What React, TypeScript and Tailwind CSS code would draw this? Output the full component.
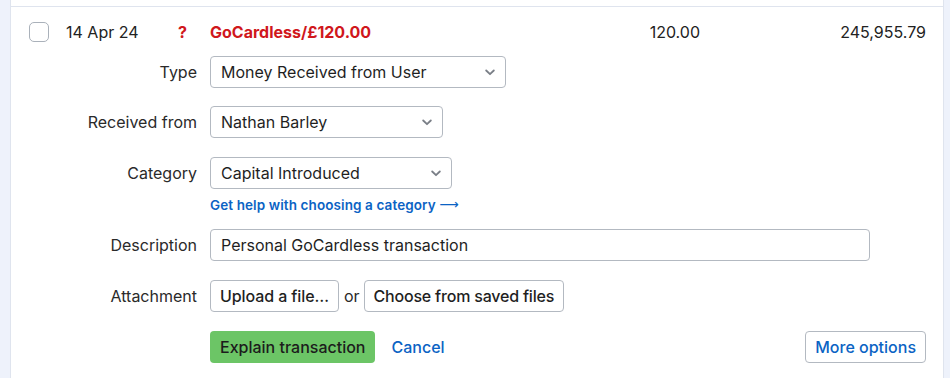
import React from 'react';

const Chevron = () => (
  <svg width="10" height="7" viewBox="0 0 10 7" className="shrink-0">
    <path d="M1.2 1.5 L5 5.2 L8.8 1.5" fill="none" stroke="#7a7f87" strokeWidth="1.8" strokeLinecap="round" strokeLinejoin="round" />
  </svg>
);

const Select = ({ value, width }: { value: string; width: string }) => (
  <div className={`flex items-center justify-between h-[32px] ${width} border border-[#b3b9c1] rounded-[4px] pl-[10px] pr-[10px] bg-white`}>
    <span className="text-[16px] text-[#1f1f1f] leading-none">{value}</span>
    <Chevron />
  </div>
);

const Label = ({ children }: { children: React.ReactNode }) => (
  <div className="w-[186px] text-right text-[16px] text-[#2a2a2a] shrink-0">{children}</div>
);

export default function App() {
  return (
    <div className="h-[378px] w-[950px] bg-[#eef2fb] overflow-hidden" style={{ fontFamily: 'Inter, "Noto Sans", sans-serif' }}>
      <div className="ml-[10px] w-[934px] h-full bg-white border-x border-[#dfe4ee]">
        <div className="h-[6px]" />
        <div className="border-t border-[#dfe4ee]">
          {/* Transaction row */}
          <div className="flex items-center h-[49px] text-[16px] text-[#222]">
            <div className="ml-[18px] w-[20px] h-[20px] rounded-[5px] border border-[#aab1ba] bg-white shrink-0" />
            <div className="ml-[17px] w-[112px]">14 Apr 24</div>
            <div className="w-[32px] text-[#d0171c] font-bold">?</div>
            <div className="flex-1 text-[#d0171c] font-bold">GoCardless/£120.00</div>
            <div className="w-[120px] text-right">120.00</div>
            <div className="w-[226px] text-right pr-[17px] box-content">245,955.79</div>
          </div>

          {/* Form */}
          <div className="flex flex-col">
            <div className="flex items-center gap-[13px]">
              <Label>Type</Label>
              <Select value="Money Received from User" width="w-[296px]" />
            </div>
            <div className="flex items-center gap-[13px] mt-[18px]">
              <Label>Received from</Label>
              <Select value="Nathan Barley" width="w-[233px]" />
            </div>
            <div className="flex items-center gap-[13px] mt-[19px]">
              <Label>Category</Label>
              <Select value="Capital Introduced" width="w-[242px]" />
            </div>
            <div className="ml-[199px] mt-[6px] h-[20px] flex items-center text-[13.5px] font-semibold text-[#0b63c4] tracking-[0.1px]">
              Get help with choosing a category&nbsp;<span style={{ fontFamily: '"DejaVu Sans", sans-serif' }} className="font-normal leading-none">⟶</span>
            </div>
            <div className="flex items-center gap-[13px] mt-[14px]">
              <Label>Description</Label>
              <div className="flex items-center h-[32px] w-[660px] border border-[#b3b9c1] rounded-[4px] pl-[10px] text-[16px] text-[#1f1f1f]">
                Personal GoCardless transaction
              </div>
            </div>
            <div className="flex items-center gap-[13px] mt-[19px]">
              <Label>Attachment</Label>
              <div className="flex items-center">
                <div className="h-[32px] px-[9px] flex items-center border border-[#b3b9c1] rounded-[4px] text-[16px] font-medium tracking-[-0.1px] text-[#1f1f1f]">
                  Upload a file…
                </div>
                <span className="ml-[5px] mr-[4px] text-[16px] text-[#2a2a2a]">or</span>
                <div className="h-[32px] px-[9px] flex items-center border border-[#b3b9c1] rounded-[4px] text-[16px] font-medium tracking-[-0.2px] text-[#1f1f1f]">
                  Choose from saved files
                </div>
              </div>
            </div>
            <div className="flex items-center mt-[19px] ml-[199px] pr-[17px]">
              <div className="h-[32px] px-[10px] flex items-center rounded-[4px] bg-[#6cc566] text-[16px] font-medium text-[#1c1c1c]">
                Explain transaction
              </div>
              <div className="ml-[16px] text-[16px] font-medium text-[#0b63c4]">Cancel</div>
              <div className="ml-auto h-[32px] px-[9px] flex items-center border border-[#b3b9c1] rounded-[4px] text-[16px] font-medium text-[#0b63c4]">
                More options
              </div>
            </div>
          </div>
        </div>
      </div>
    </div>
  );
}
